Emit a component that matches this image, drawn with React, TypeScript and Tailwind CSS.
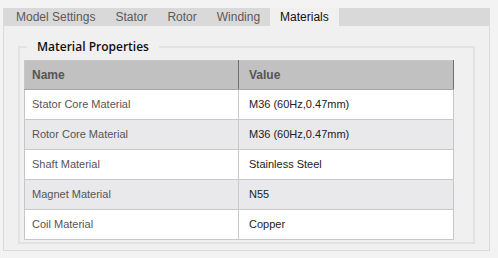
const tabs = ['Model Settings', 'Stator', 'Rotor', 'Winding', 'Materials']

const rows = [
  { name: 'Stator Core Material', value: 'M36 (60Hz,0.47mm)' },
  { name: 'Rotor Core Material', value: 'M36 (60Hz,0.47mm)' },
  { name: 'Shaft Material', value: 'Stainless Steel' },
  { name: 'Magnet Material', value: 'N55' },
  { name: 'Coil Material', value: 'Copper' },
]

export default function App() {
  const active = 'Materials'

  return (
    <div className="h-[258px] w-[498px] bg-[#f3f3f3] pl-[3px] pt-2 font-['Liberation_Sans',Arial,sans-serif]">
      <div className="h-[243px] w-[487px] border-x border-b border-[#dadada] bg-[#f0f0f0]">
        <div className="flex h-[18px] bg-[#d9d9d9] pl-[2px]">
          {tabs.map((tab) => (
            <div
              key={tab}
              className={
                tab === active
                  ? 'flex h-full items-center bg-[#f0f0f0] px-[10px] text-[12px] leading-none text-[#111]'
                  : 'flex h-full items-center px-[10px] text-[12px] leading-none text-[#5a5a5a]'
              }
            >
              {tab}
            </div>
          ))}
        </div>

        <fieldset className="mx-[14px] mt-[14px] h-[204px] border-2 border-[#e2e2e2] px-[4px] pb-[4px] pt-[6px]">
          <legend className="ml-[3px] px-[10px] font-['Open_Sans',sans-serif] text-[12px] font-semibold leading-[14px] text-[#111]">
            Material Properties
          </legend>

          <table className="w-[430px] border-collapse border border-[#c6c6c6] text-left">
            <thead>
              <tr className="h-[29px] bg-[#c1c1c1]">
                <th className="w-[214px] border-b border-r border-b-[#a5a5a5] border-r-[#6f6f6f] pl-[7px] text-[12px] font-bold text-[#555]">
                  Name
                </th>
                <th className="border-b border-r border-b-[#a5a5a5] border-r-[#6f6f6f] pl-[10px] text-[12px] font-bold text-[#555]">
                  Value
                </th>
              </tr>
            </thead>
            <tbody>
              {rows.map((row, i) => (
                <tr key={row.name} className={i % 2 === 1 ? 'h-[30px] bg-[#e9e9eb]' : 'h-[30px] bg-white'}>
                  <td className="border-b border-r border-[#c9c9c9] pl-[7px] text-[11px] text-[#555]">{row.name}</td>
                  <td className="border-b border-[#c9c9c9] pl-[10px] text-[11px] text-[#222]">{row.value}</td>
                </tr>
              ))}
            </tbody>
          </table>
        </fieldset>
      </div>
    </div>
  )
}
